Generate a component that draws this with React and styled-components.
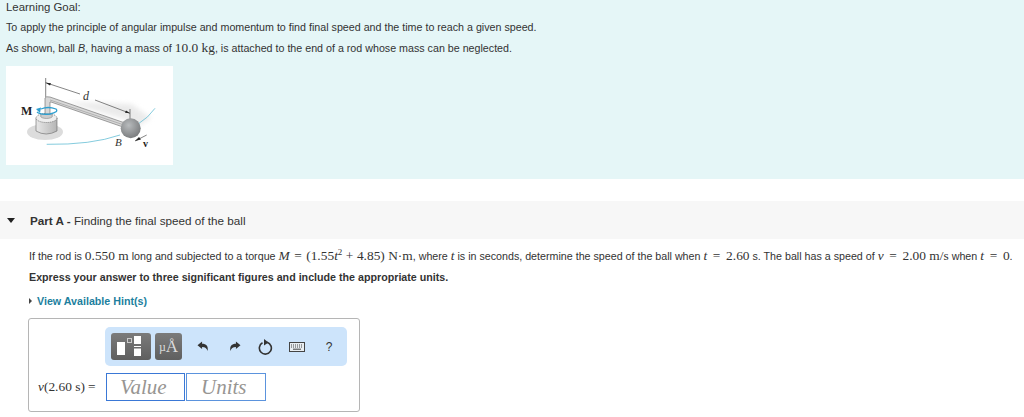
import React from "react";
import styled, { createGlobalStyle } from "styled-components";

const Global = createGlobalStyle`
  html, body { margin: 0; padding: 0; background: #fff; }
  body { font-family: "Liberation Sans", Arial, sans-serif; color: #333; overflow: hidden; }
`;
const Page = styled.div`width: 1024px; height: 417px; overflow: hidden;`;
const Goal = styled.section`
  background: #e5f6f7; height: 179px; box-sizing: border-box; padding: 0 6px;
`;
const GoalTitle = styled.div`font-size: 11.4px; line-height: 14px; color: #333;`;
const GoalText = styled.p`
  margin: ${p => p.$top}px 0 0; font-size: 10.7px; line-height: 14px; color: #333; white-space: nowrap;
`;
const FigureCard = styled.div`
  margin-top: 11px; width: 167px; height: 99px; background: #fff;
`;
const PartHeader = styled.div`
  margin-top: 22px; height: 38px; background: #f7f7f7; display: flex; align-items: center; font-size: 11.7px; color: #333;
`;
const Caret = styled.span`
  width: 0; height: 0; margin-left: 7px; margin-right: 15px;
  border-left: 4.5px solid transparent; border-right: 4.5px solid transparent; border-top: 5px solid #222;
`;
const Strong = styled.b`font-weight: 700;`;
const PartBody = styled.div`padding: 8px 0 0 29px;`;
const Line = styled.p`
  margin: 0; font-size: 10.7px; line-height: 17px; height: 17px; white-space: nowrap; color: #333;
`;
const M = styled.span`font-family: "Liberation Serif", "Times New Roman", serif; font-size: 13.4px; color: #333;`;
const I = styled.i`font-family: "Liberation Serif", serif;`;
const Op = styled.span`margin: 0 ${p => p.$m}px;`;
const LabelEq = styled.span`margin-left: 3px;`;
const Sup = styled.sup`font-size: 9px; line-height: 0;`;
const Bold = styled.p`margin: 6px 0 0; font-size: 10.7px; line-height: 14px; font-weight: 700; color: #333; white-space: nowrap;`;
const Hint = styled.a`
  display: flex; align-items: center; gap: 5px; margin-top: 10px; font-size: 10.7px; line-height: 14px; font-weight: 700; color: #1d7f9e;
`;
const HintCaret = styled.span`
  width: 0; height: 0; border-top: 3px solid transparent; border-bottom: 3px solid transparent; border-left: 3.5px solid #444;
`;
const AnswerBox = styled.div`
  margin: 10px 0 0 -1px; width: 332px; height: 94px; box-sizing: border-box; border: 1px solid #b5b5b5; border-radius: 3px;
  display: flex; flex-direction: column; padding: 8px 0 0 9px;
`;
const Toolbar = styled.div`
  align-self: flex-start; margin-left: 67px; width: 242px; height: 39px; box-sizing: border-box; background: #cde4fb; border-radius: 5px;
  display: flex; align-items: center; padding: 0 6px;
`;
const ToolButton = styled.div`
  height: 27px; width: ${p => p.$w}px; margin-right: 4px; background: linear-gradient(#7b7b7b, #5f5f5f); border-radius: 3px;
  display: flex; align-items: center; justify-content: center; color: #ddd; flex: none;
`;
const Mu = styled.span`font-family: "Liberation Serif", serif; font-size: ${p => p.$s}px; line-height: 1; color: #dcdcdc;`;
const Tool = styled.div`
  width: ${p => p.$w}px; display: flex; justify-content: center; align-items: center; flex: none; color: #333;
`;
const Question = styled.span`font-size: 12px; color: #333;`;
const InputRow = styled.div`display: flex; align-items: center; margin-top: 7px;`;
const Label = styled.span`
  font-family: "Liberation Serif", serif; font-size: 13.4px; color: #333; width: 68px; white-space: nowrap; flex: none;
`;
const Field = styled.div`
  width: ${p => p.$w}px; height: 28px; box-sizing: border-box; border: 1px solid ${p => p.$c}; margin-right: 1px;
  font-family: "Liberation Serif", serif; font-style: italic; font-size: 21px; line-height: 26px; color: #979592; padding-left: ${p => p.$pad}px;
`;

const Figure = () => (
  <svg width="167" height="99" viewBox="0 0 167 99">
    <defs>
      <radialGradient id="ball" cx="0.4" cy="0.35" r="0.7">
        <stop offset="0" stopColor="#b8bbbd" />
        <stop offset="1" stopColor="#77797b" />
      </radialGradient>
      <linearGradient id="can" x1="0" y1="0" x2="1" y2="0">
        <stop offset="0" stopColor="#e8e8e8" />
        <stop offset="1" stopColor="#b5b5b5" />
      </linearGradient>
      <filter id="blur"><feGaussianBlur stdDeviation="2.5" /></filter>
    </defs>
    <path d="M60 36 L125 38 L145 52 L132 60 L118 53Z" fill="#ddd" opacity=".6" filter="url(#blur)" />
    <ellipse cx="39" cy="66" rx="18" ry="8" fill="#dcdcdc" />
    <path d="M30 52 V65 Q40 71 51 65 V52Z" fill="url(#can)" stroke="#666" strokeWidth=".6" />
    <ellipse cx="40.5" cy="52" rx="10.5" ry="4.5" fill="#eee" stroke="#555" strokeWidth=".7" strokeDasharray="1 1" />
    <ellipse cx="40.5" cy="50" rx="6" ry="2.5" fill="#ccc" stroke="#777" strokeWidth=".5" />
    <path d="M39 32 Q40 30 44 31 L119 57 L117 61 L45 36 L44 36 V48 H39Z" fill="#d8d8d8" stroke="#666" strokeWidth=".6" />
    <path d="M44 34 L118 59" stroke="#888" strokeWidth=".5" />
    <path d="M35 43 Q42 40 50 43 Q53 46 44 48 Q34 49 31 46" fill="none" stroke="#2e9fd0" strokeWidth="1.3" />
    <path d="M30 43 L35 41.5 L34 47Z" fill="#2e9fd0" />
    <path d="M39.7 12 V31 M124 43 V53 M39.7 16.7 L74 28 M89 34 L124 47.3" stroke="#333" strokeWidth=".6" fill="none" />
    <path d="M39.7 16.7 L45 17.2 L44 19.5Z" fill="#222" />
    <path d="M124 47.3 L119 46.8 L120 44.5Z" fill="#222" />
    <path d="M149 42.3 Q142 52 133 57.3" stroke="#4fb4cf" strokeWidth=".7" fill="none" />
    <path d="M40.7 78.3 Q85 79 114 69" stroke="#4fb4cf" strokeWidth=".7" fill="none" />
    <circle cx="124.7" cy="62.3" r="10" fill="url(#ball)" />
    <path d="M140.7 69 L129 75" stroke="#333" strokeWidth=".6" />
    <path d="M129 75 L133 71 L135 73.5Z" fill="#222" />
    <text x="77" y="34" fontFamily="Liberation Serif" fontStyle="italic" fontSize="12" fill="#333">d</text>
    <text x="15" y="49" fontFamily="Liberation Serif" fontWeight="700" fontSize="12" fill="#222">M</text>
    <text x="109" y="80" fontFamily="Liberation Serif" fontStyle="italic" fontSize="11" fill="#333">B</text>
    <text x="137" y="81" fontFamily="Liberation Serif" fontWeight="700" fontSize="10" fill="#222">v</text>
  </svg>
);

const Templates = () => (
  <svg width="32" height="21" viewBox="0 0 32 21">
    <rect x="2" y="6" width="8" height="13" fill="#fff" />
    <rect x="12.5" y="2.5" width="4" height="4" fill="none" stroke="#ccc" strokeWidth="1" />
    <rect x="19" y="0" width="7" height="8" fill="#fff" />
    <rect x="19" y="10" width="7" height="1" fill="#fff" />
    <rect x="19" y="12.5" width="7" height="7.5" fill="#fff" />
  </svg>
);
const Undo = ({ flip }) => (
  <svg width="12" height="11" viewBox="0 0 13 12" style={flip ? { transform: "scaleX(-1)" } : undefined}>
    <path d="M0.5 4.5 L5.5 0.5 V3 C10 3 12.5 5.5 11.5 11 C10.5 8 9 6.5 5.5 6.5 V8.8 Z" fill="#333" />
  </svg>
);
const Reset = () => (
  <svg width="15" height="17" viewBox="0 0 15 17">
    <path d="M9 4.3 A6 6 0 1 1 4.5 4.8" fill="none" stroke="#333" strokeWidth="1.6" />
    <path d="M6 1 L10.5 4.5 L6 7.5Z" fill="#333" />
  </svg>
);
const Keyboard = () => (
  <svg width="16" height="10" viewBox="0 0 16 10">
    <rect x=".5" y=".5" width="15" height="9" fill="#e9eef2" stroke="#444" />
    <path d="M2 3 H14 M2 5 H14" stroke="#444" strokeDasharray="1 1" />
    <path d="M4 7.2 H12" stroke="#444" />
  </svg>
);

export default function App() {
  return (
    <Page>
      <Global />
      <Goal>
        <GoalTitle>Learning Goal:</GoalTitle>
        <GoalText $top={6}>To apply the principle of angular impulse and momentum to find final speed and the time to reach a given speed.</GoalText>
        <GoalText $top={7}>As shown, ball <i>B</i>, having a mass of <M>10.0 kg</M>, is attached to the end of a rod whose mass can be neglected.</GoalText>
        <FigureCard><Figure /></FigureCard>
      </Goal>
      <PartHeader>
        <Caret />
        <span><Strong>Part A - </Strong>Finding the final speed of the ball</span>
      </PartHeader>
      <PartBody>
        <Line>If the rod is <M>0.550 m</M> long and subjected to a torque <M><I>M</I><Op $m={4.5}>=</Op>(1.55<I>t</I><Sup>2</Sup><Op $m={3.5}>+</Op>4.85) N·m</M>, where <M><I>t</I></M> is in seconds, determine the speed of the ball when <M><I>t</I><Op $m={5.7}>=</Op>2.60</M> s. The ball has a speed of <M><I>v</I><Op $m={5.7}>=</Op>2.00 m/s</M> when <M><I>t</I><Op $m={5.7}>=</Op>0</M>.</Line>
        <Bold>Express your answer to three significant figures and include the appropriate units.</Bold>
        <Hint><HintCaret />View Available Hint(s)</Hint>
        <AnswerBox>
          <Toolbar>
            <ToolButton $w={40}><Templates /></ToolButton>
            <ToolButton $w={27}><Mu $s={12}>µ</Mu><Mu $s={17}>Å</Mu></ToolButton>
            <Tool $w={33}><Undo /></Tool>
            <Tool $w={31}><Undo flip /></Tool>
            <Tool $w={30}><Reset /></Tool>
            <Tool $w={33}><Keyboard /></Tool>
            <Tool $w={32}><Question>?</Question></Tool>
          </Toolbar>
          <InputRow>
            <Label><I>v</I>(2.60 s)<LabelEq>=</LabelEq></Label>
            <Field $c="#3a78d6" $w={79} $pad={13}>Value</Field>
            <Field $c="#5b93dd" $w={80} $pad={14}>Units</Field>
          </InputRow>
        </AnswerBox>
      </PartBody>
    </Page>
  );
}
